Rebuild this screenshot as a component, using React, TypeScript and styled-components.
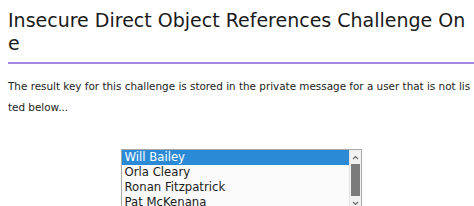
import React, { useState } from "react";
import styled, { createGlobalStyle } from "styled-components";

const GlobalStyle = createGlobalStyle`
  html, body {
    margin: 0;
    padding: 0;
    background: #ffffff;
  }
  body {
    font-family: "DejaVu Sans", sans-serif;
    color: #1c1c1c;
  }
`;

const Page = styled.div`
  padding-left: 8px;
  overflow: hidden;
  height: 206px;
`;

const Title = styled.h1`
  margin: 9px 0 0 0;
  padding-bottom: 7px;
  font-size: 19px;
  font-weight: normal;
  line-height: 23px;
  word-break: break-all;
  color: #1a1a1a;
  border-bottom: 2px solid #a486e3;
`;

const Intro = styled.p`
  margin: 12px 0 0 0;
  font-size: 10.4px;
  line-height: 21px;
  word-break: break-all;
  color: #222;
`;

const ListWrap = styled.div`
  display: flex;
  justify-content: center;
  margin-top: 31px;
`;

const ListBox = styled.div`
  display: flex;
  width: 241px;
  height: 62px;
  border: 1px solid #a9a9a9;
  border-bottom: none;
  background: #fafafa;
  box-sizing: border-box;
`;

const Options = styled.div`
  flex: 1;
  display: flex;
  flex-direction: column;
`;

const Option = styled.div<{ selected: boolean }>`
  height: 15px;
  line-height: 15px;
  padding-left: 3px;
  font-size: 11.7px;
  white-space: nowrap;
  color: ${({ selected }) => (selected ? "#ffffff" : "#1c1c1c")};
  background: ${({ selected }) => (selected ? "#2a8ad6" : "transparent")};
`;

const ScrollBar = styled.div`
  width: 11px;
  display: flex;
  flex-direction: column;
  background: #f1f1f1;
  border-left: 1px solid #e4e4e4;
`;

const ScrollButton = styled.div`
  height: 14px;
  display: flex;
  align-items: center;
  justify-content: center;
`;

const Thumb = styled.div`
  height: 32px;
  margin: 0 1px;
  background: #7b7b7b;
`;

const Chevron = ({ up }: { up?: boolean }) => (
  <svg width="7" height="5" viewBox="0 0 7 5">
    <path
      d={up ? "M1 4 L3.5 1.5 L6 4" : "M1 1 L3.5 3.5 L6 1"}
      fill="none"
      stroke="#666"
      strokeWidth="1.1"
    />
  </svg>
);

const users = ["Will Bailey", "Orla Cleary", "Ronan Fitzpatrick", "Pat McKenana"];

export default function App() {
  const [selected, setSelected] = useState(0);

  return (
    <Page>
      <GlobalStyle />
      <Title>Insecure Direct Object References Challenge One</Title>
      <Intro>
        The result key for this challenge is stored in the private message for a user that is
        not listed below...
      </Intro>
      <ListWrap>
        <ListBox>
          <Options>
            {users.map((u, i) => (
              <Option key={u} selected={i === selected} onClick={() => setSelected(i)}>
                {u}
              </Option>
            ))}
          </Options>
          <ScrollBar>
            <ScrollButton>
              <Chevron up />
            </ScrollButton>
            <Thumb />
            <ScrollButton>
              <Chevron />
            </ScrollButton>
          </ScrollBar>
        </ListBox>
      </ListWrap>
    </Page>
  );
}
